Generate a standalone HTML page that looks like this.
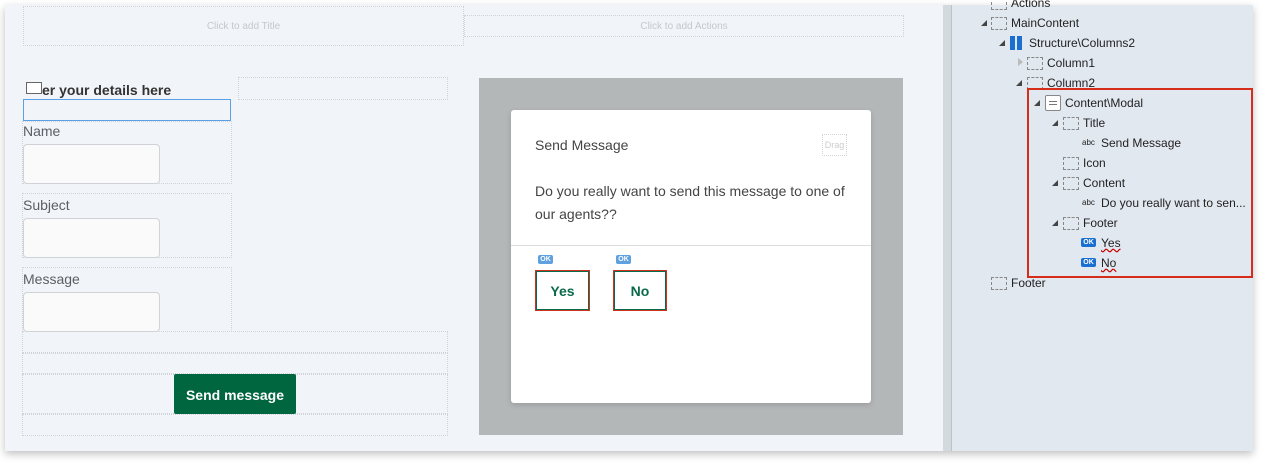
<!DOCTYPE html>
<html><head><style>
*{margin:0;padding:0;box-sizing:border-box}
body{width:1268px;height:466px;background:#fff;font-family:"Liberation Sans",sans-serif;position:relative;overflow:hidden}
.a{position:absolute}
.dot{border:1px dotted #d0d4d8}
.lbl{font-size:14px;color:#5a5f66}
.inp{background:#fafafa;border:1px solid #cfd3d8;border-radius:4px}
.t{position:absolute;font-size:12px;color:#222;white-space:nowrap}
.box{position:absolute;width:16px;height:13px;border:1px dashed #888}
.tri{position:absolute;width:0;height:0;border-left:6px solid transparent;border-bottom:6px solid #444}
.ok{position:absolute;width:15px;height:9px;background:#1a6fd0;color:#fff;font-size:7px;font-weight:bold;text-align:center;line-height:9px;border-radius:2px}
</style></head><body>
<div class="a" style="left:5px;top:5px;width:1248px;height:446px;background:#f1f4f8;box-shadow:0 3px 8px rgba(0,0,0,.25)"></div>
<div class="a" style="left:943px;top:5px;width:9px;height:446px;background:#d3dadd;border-right:1px solid #bcc4c8"></div>
<div class="a" style="left:952px;top:5px;width:301px;height:446px;background:#e2e8f0"></div>

<div class="a dot" style="left:23px;top:6px;width:441px;height:40px;text-align:center;font-size:10px;color:#c4c8cc;line-height:40px">Click to add Title</div>
<div class="a dot" style="left:464px;top:15px;width:440px;height:22px;text-align:center;font-size:10px;color:#c4c8cc;line-height:22px">Click to add Actions</div>

<div class="a dot" style="left:238px;top:77px;width:210px;height:23px"></div>
<div class="a" style="left:26px;top:82px;width:16px;height:12px;border:1px solid #666;background:#fff"></div>
<div class="a" style="left:42px;top:82px;font-size:14px;font-weight:bold;color:#333">er your details here</div>
<div class="a" style="left:23px;top:99px;width:208px;height:22px;border:1px solid #5aa0e8"></div>
<div class="a dot" style="left:22px;top:121px;width:210px;height:63px"></div>
<div class="a lbl" style="left:23px;top:123px">Name</div>
<div class="a inp" style="left:23px;top:144px;width:137px;height:40px"></div>
<div class="a dot" style="left:22px;top:193px;width:210px;height:65px"></div>
<div class="a lbl" style="left:23px;top:197px">Subject</div>
<div class="a inp" style="left:23px;top:218px;width:137px;height:40px"></div>
<div class="a dot" style="left:22px;top:267px;width:210px;height:65px"></div>
<div class="a lbl" style="left:23px;top:271px">Message</div>
<div class="a inp" style="left:23px;top:292px;width:137px;height:40px"></div>
<div class="a dot" style="left:22px;top:331px;width:426px;height:22px"></div>
<div class="a dot" style="left:22px;top:353px;width:426px;height:21px"></div>
<div class="a dot" style="left:22px;top:374px;width:426px;height:40px"></div>
<div class="a dot" style="left:22px;top:414px;width:426px;height:22px"></div>
<div class="a" style="left:174px;top:374px;width:122px;height:40px;background:#00663f;border-radius:2px;color:#fff;font-weight:bold;font-size:14px;text-align:center;line-height:42px">Send message</div>

<div class="a" style="left:479px;top:78px;width:424px;height:357px;background:#b4b7b8"></div>
<div class="a" style="left:511px;top:110px;width:360px;height:293px;background:#fff;border-radius:3px;box-shadow:0 2px 6px rgba(0,0,0,.15)"></div>
<div class="a" style="left:535px;top:137px;font-size:14px;color:#444">Send Message</div>
<div class="a dot" style="left:822px;top:134px;width:25px;height:22px;font-size:9px;color:#ccc;line-height:20px;text-align:center">Drag</div>
<div class="a" style="left:535px;top:180px;width:320px;font-size:14px;color:#444;line-height:23px">Do you really want to send this message to one of our agents??</div>
<div class="a" style="left:511px;top:245px;width:360px;height:1px;background:#ddd"></div>
<div class="ok" style="left:538px;top:255px;background:#5ea0e0">OK</div>
<div class="ok" style="left:616px;top:255px;background:#5ea0e0">OK</div>
<div class="a" style="left:535px;top:270px;width:55px;height:41px;border:1px solid #d03020;box-shadow:inset 0 0 0 1px #0a6a4a;color:#0a6a4a;font-weight:bold;font-size:14px;text-align:center;line-height:41px">Yes</div>
<div class="a" style="left:613px;top:270px;width:54px;height:41px;border:1px solid #d03020;box-shadow:inset 0 0 0 1px #0a6a4a;color:#0a6a4a;font-weight:bold;font-size:14px;text-align:center;line-height:41px">No</div>

<div class="box" style="left:991px;top:-3px"></div><div class="t" style="left:1011px;top:-4px">Actions</div>
<div class="tri" style="left:981px;top:20px"></div><div class="box" style="left:991px;top:17px"></div><div class="t" style="left:1011px;top:16px">MainContent</div>
<div class="tri" style="left:999px;top:40px"></div><div class="a" style="left:1010px;top:36px;width:5px;height:14px;background:#1a6fd0"></div><div class="a" style="left:1017px;top:36px;width:5px;height:14px;background:#1a6fd0"></div><div class="t" style="left:1029px;top:36px">Structure\Columns2</div>
<div class="a" style="left:1018px;top:58px;border-left:5px solid #bbb;border-top:4px solid transparent;border-bottom:4px solid transparent"></div><div class="box" style="left:1027px;top:57px"></div><div class="t" style="left:1047px;top:56px">Column1</div>
<div class="tri" style="left:1016px;top:80px"></div><div class="box" style="left:1027px;top:77px"></div><div class="t" style="left:1047px;top:76px">Column2</div>
<div class="a" style="left:1027px;top:88px;width:226px;height:190px;border:2px solid #d62c1a"></div>
<div class="tri" style="left:1034px;top:100px"></div><div class="a" style="left:1045px;top:95px;width:16px;height:16px;border:1px solid #888;border-radius:2px;background:#fff"><div class="a" style="left:3px;top:5px;width:8px;height:1px;background:#777"></div><div class="a" style="left:3px;top:8px;width:8px;height:1px;background:#777"></div></div><div class="t" style="left:1065px;top:96px">Content\Modal</div>
<div class="tri" style="left:1052px;top:120px"></div><div class="box" style="left:1063px;top:117px"></div><div class="t" style="left:1083px;top:116px">Title</div>
<div class="t" style="left:1082px;top:138px;font-size:8px">abc</div><div class="t" style="left:1101px;top:136px">Send Message</div>
<div class="box" style="left:1063px;top:157px"></div><div class="t" style="left:1083px;top:156px">Icon</div>
<div class="tri" style="left:1052px;top:180px"></div><div class="box" style="left:1063px;top:177px"></div><div class="t" style="left:1083px;top:176px">Content</div>
<div class="t" style="left:1082px;top:198px;font-size:8px">abc</div><div class="t" style="left:1101px;top:196px">Do you really want to sen...</div>
<div class="tri" style="left:1052px;top:220px"></div><div class="box" style="left:1063px;top:217px"></div><div class="t" style="left:1083px;top:216px">Footer</div>
<div class="ok" style="left:1081px;top:238px">OK</div><div class="t" style="left:1101px;top:236px;text-decoration:underline wavy #c00">Yes</div>
<div class="ok" style="left:1081px;top:258px">OK</div><div class="t" style="left:1101px;top:256px;text-decoration:underline wavy #c00">No</div>
<div class="box" style="left:991px;top:277px"></div><div class="t" style="left:1011px;top:276px">Footer</div>
</body></html>
